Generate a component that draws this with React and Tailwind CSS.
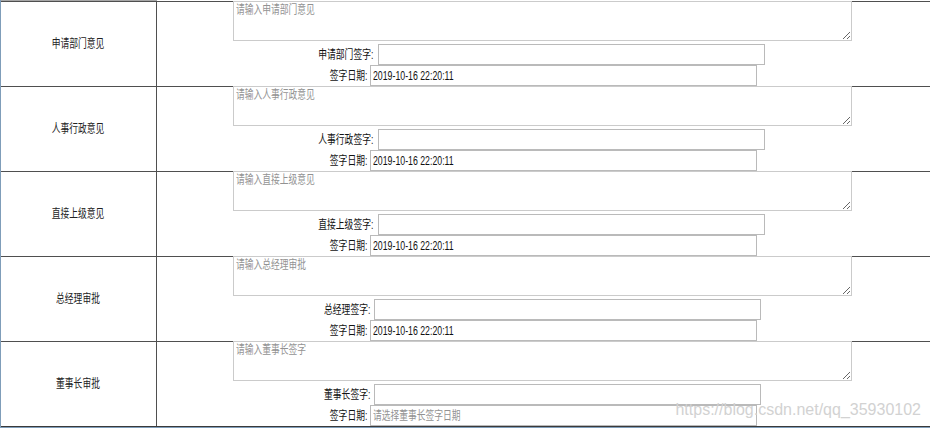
import React from 'react'

const ROWS = [
  { title: '申请部门意见', ph: '请输入申请部门意见', sign: '申请部门签字:', lw: 'w-[58px]', date: '2019-10-16 22:20:11' },
  { title: '人事行政意见', ph: '请输入人事行政意见', sign: '人事行政签字:', lw: 'w-[58px]', date: '2019-10-16 22:20:11' },
  { title: '直接上级意见', ph: '请输入直接上级意见', sign: '直接上级签字:', lw: 'w-[58px]', date: '2019-10-16 22:20:11' },
  { title: '总经理审批', ph: '请输入总经理审批', sign: '总经理签字:', lw: 'w-[51px]', date: '2019-10-16 22:20:11' },
  { title: '董事长审批', ph: '请输入董事长签字', sign: '董事长签字:', lw: 'w-[51px]', date: null, datePh: '请选择董事长签字日期' },
]

// the shot is squeezed sideways, so text gets narrowed the same way
function Sq({ children, origin = 'origin-left', className = '' }) {
  return <span className={'inline-block shrink-0 whitespace-nowrap scale-x-[0.73] ' + origin + ' ' + className}>{children}</span>
}

function Row({ r }) {
  return (
    <div className="flex h-[85px] border-t border-[#4f4f4f]">
      <div className="w-[156px] shrink-0 border-r border-[#4f4f4f] flex items-center justify-center text-[#222]">
        <Sq origin="origin-center">{r.title}</Sq>
      </div>
      <div className="flex-1 flex flex-col items-center pr-[3px]">
        <div className="relative -mt-px w-[619px] h-[40px] shrink-0">
          <textarea className="block w-full h-full border border-[#cbcbcb] bg-white outline-none" />
          <span className="absolute left-[3px] top-[2px] leading-[14px] text-[#929292] pointer-events-none">
            <Sq>{r.ph}</Sq>
          </span>
        </div>
        <div className="flex items-center mt-[3px] h-[21px]">
          <div className={r.lw + ' flex justify-end pr-[4px] text-[#111]'}>
            <Sq origin="origin-right">{r.sign}</Sq>
          </div>
          <div className="w-[387px] h-[21px] border border-[#bababa] bg-white" />
        </div>
        <div className="flex items-center h-[21px]">
          <div className="w-[42px] flex justify-end pr-[2px] text-[#111]">
            <Sq origin="origin-right">签字日期:</Sq>
          </div>
          <div className="w-[387px] h-[21px] border border-[#bababa] bg-white flex items-center pl-[2px]">
            {r.date ? <Sq className="text-[#111]">{r.date}</Sq> : <Sq className="text-[#929292]">{r.datePh}</Sq>}
          </div>
        </div>
      </div>
    </div>
  )
}

export default function App() {
  return (
    <div className="relative w-[930px] h-[428px] bg-white border-l border-b border-[#7f9db9] overflow-hidden text-[12px] font-['Liberation_Sans','Noto_Sans_CJK_SC',sans-serif]">
      <div className="flex h-px">
        <div className="w-[156px] bg-[#a6a6a6]" />
      </div>
      {ROWS.map(r => <Row key={r.title} r={r} />)}
      <div className="h-px bg-[#3a3a3a]" />
      <div className="absolute right-[9px] bottom-[8px] text-[16px] leading-[18px] text-[#d2d2d2] font-['Liberation_Sans',sans-serif] pointer-events-none">
        https://blog.csdn.net/qq_35930102
      </div>
    </div>
  )
}
